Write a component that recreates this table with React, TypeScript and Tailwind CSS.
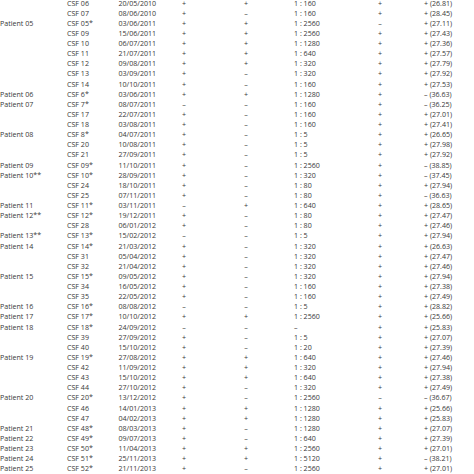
type Row = [string, string, string, string, string, string, string, string]

const rows: Row[] = [
  ['', 'CSF 06', '20/05/2010', '+', '+', '1 : 160', '+', '+ (26.81)'],
  ['', 'CSF 07', '08/06/2010', '+', '–', '1 : 160', '+', '+ (28.45)'],
  ['Patient 05', 'CSF 05*', '03/06/2011', '+', '+', '1 : 2560', '–', '+ (27.11)'],
  ['', 'CSF 09', '15/06/2011', '+', '+', '1 : 2560', '+', '+ (27.43)'],
  ['', 'CSF 10', '06/07/2011', '+', '+', '1 : 1280', '+', '+ (27.36)'],
  ['', 'CSF 11', '21/07/2011', '+', '+', '1 : 640', '+', '+ (27.57)'],
  ['', 'CSF 12', '09/08/2011', '+', '+', '1 : 320', '+', '+ (27.79)'],
  ['', 'CSF 13', '03/09/2011', '+', '–', '1 : 320', '+', '+ (27.92)'],
  ['', 'CSF 14', '10/10/2011', '+', '–', '1 : 160', '+', '+ (27.53)'],
  ['Patient 06', 'CSF 6*', '03/06/2011', '+', '+', '1 : 1280', '+', '– (36.63)'],
  ['Patient 07', 'CSF 7*', '08/07/2011', '–', '–', '1 : 160', '+', '– (36.25)'],
  ['', 'CSF 17', '22/07/2011', '+', '–', '1 : 160', '+', '+ (27.01)'],
  ['', 'CSF 18', '03/08/2011', '+', '–', '1 : 160', '+', '+ (27.41)'],
  ['Patient 08', 'CSF 8*', '04/07/2011', '+', '–', '1 : 5', '+', '+ (26.65)'],
  ['', 'CSF 20', '10/08/2011', '+', '–', '1 : 5', '+', '+ (27.98)'],
  ['', 'CSF 21', '27/09/2011', '+', '–', '1 : 5', '+', '+ (27.92)'],
  ['Patient 09', 'CSF 09*', '11/10/2011', '+', '–', '1 : 2560', '+', '– (38.85)'],
  ['Patient 10**', 'CSF 10*', '28/09/2011', '+', '–', '1 : 320', '+', '– (37.45)'],
  ['', 'CSF 24', '18/10/2011', '+', '–', '1 : 80', '+', '+ (27.94)'],
  ['', 'CSF 25', '07/11/2011', '+', '–', '1 : 80', '+', '– (36.63)'],
  ['Patient 11', 'CSF 11*', '03/11/2011', '–', '+', '1 : 640', '+', '+ (28.65)'],
  ['Patient 12**', 'CSF 12*', '19/12/2011', '+', '–', '1 : 80', '+', '+ (27.47)'],
  ['', 'CSF 28', '06/01/2012', '+', '–', '1 : 80', '+', '+ (27.46)'],
  ['Patient 13**', 'CSF 13*', '15/02/2012', '–', '–', '1 : 5', '+', '+ (27.94)'],
  ['Patient 14', 'CSF 14*', '21/03/2012', '+', '–', '1 : 320', '+', '+ (26.63)'],
  ['', 'CSF 31', '05/04/2012', '+', '–', '1 : 320', '+', '+ (27.47)'],
  ['', 'CSF 32', '21/04/2012', '+', '–', '1 : 320', '+', '+ (27.46)'],
  ['Patient 15', 'CSF 15*', '09/05/2012', '+', '–', '1 : 320', '+', '+ (27.94)'],
  ['', 'CSF 34', '16/05/2012', '+', '–', '1 : 160', '+', '+ (27.38)'],
  ['', 'CSF 35', '22/05/2012', '+', '–', '1 : 160', '+', '+ (27.49)'],
  ['Patient 16', 'CSF 16*', '08/08/2012', '–', '–', '1 : 5', '+', '+ (28.82)'],
  ['Patient 17', 'CSF 17*', '10/10/2012', '+', '+', '1 : 2560', '+', '+ (25.66)'],
  ['Patient 18', 'CSF 18*', '24/09/2012', '–', '–', '–', '+', '+ (25.83)'],
  ['', 'CSF 39', '27/09/2012', '+', '–', '1 : 5', '+', '+ (27.07)'],
  ['', 'CSF 40', '15/10/2012', '+', '–', '1 : 20', '+', '+ (27.39)'],
  ['Patient 19', 'CSF 19*', '27/08/2012', '+', '+', '1 : 640', '+', '+ (27.46)'],
  ['', 'CSF 42', '11/09/2012', '+', '+', '1 : 320', '+', '+ (27.94)'],
  ['', 'CSF 43', '15/10/2012', '+', '+', '1 : 640', '+', '+ (27.38)'],
  ['', 'CSF 44', '27/10/2012', '+', '–', '1 : 320', '+', '+ (27.49)'],
  ['Patient 20', 'CSF 20*', '13/12/2012', '+', '–', '1 : 2560', '–', '– (36.67)'],
  ['', 'CSF 46', '14/01/2013', '+', '+', '1 : 1280', '+', '+ (25.66)'],
  ['', 'CSF 47', '04/02/2013', '+', '+', '1 : 1280', '+', '+ (25.83)'],
  ['Patient 21', 'CSF 48*', '08/03/2013', '+', '–', '1 : 1280', '+', '+ (27.07)'],
  ['Patient 22', 'CSF 49*', '09/07/2013', '+', '–', '1 : 640', '+', '+ (27.39)'],
  ['Patient 23', 'CSF 50*', '11/04/2013', '+', '+', '1 : 2560', '+', '+ (27.01)'],
  ['Patient 24', 'CSF 51*', '25/11/2013', '+', '+', '1 : 5120', '+', '– (38.21)'],
  ['Patient 25', 'CSF 52*', '21/11/2013', '+', '–', '1 : 2560', '+', '+ (27.01)'],
]

export default function App() {
  return (
    <div className="w-[474px] h-[474px] overflow-hidden bg-white">
      <div
        className="mt-[-2.4px] text-[7.1px] leading-[10.13px] text-[#383838]"
        style={{ fontFamily: '"Open Sans", "Liberation Sans", sans-serif' }}
      >
        {rows.map((r, i) => (
          <div key={i} className="flex whitespace-nowrap">
            <span className="w-[67px]">{r[0]}</span>
            <span className="w-[51.5px]">{r[1]}</span>
            <span className="w-[51.5px]">{r[2]}</span>
            <span className="w-[28px] text-center">{r[3]}</span>
            <span className="w-[96px] text-center">{r[4]}</span>
            <span className="w-[72px]">{r[5]}</span>
            <span className="w-[28px] text-center">{r[6]}</span>
            <span className="pl-[30px]">{r[7]}</span>
          </div>
        ))}
      </div>
    </div>
  )
}
